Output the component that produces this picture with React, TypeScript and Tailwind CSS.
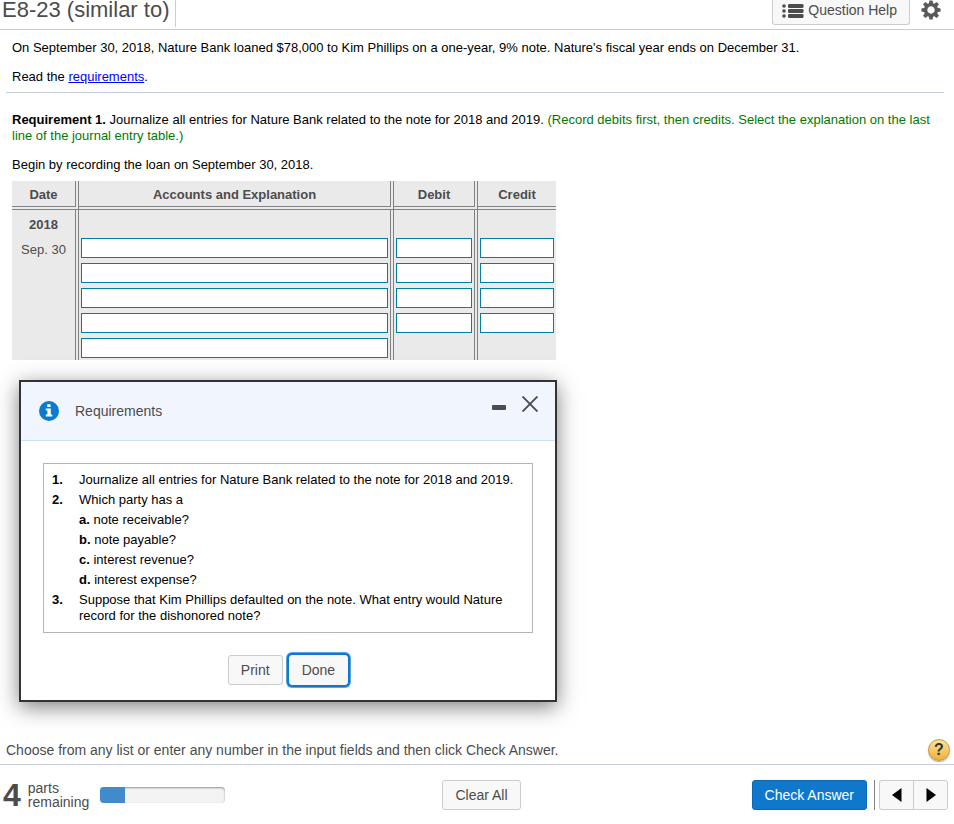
import { useState } from "react";
import type { ReactNode } from "react";
import clsx from "clsx";

interface EntryRow {
  date?: string;
  hasAmounts: boolean;
}

const entryRows: EntryRow[] = [
  { date: "Sep. 30", hasAmounts: true },
  { hasAmounts: true },
  { hasAmounts: true },
  { hasAmounts: true },
  { hasAmounts: false },
];

const parties = [
  { letter: "a.", text: "note receivable?" },
  { letter: "b.", text: "note payable?" },
  { letter: "c.", text: "interest revenue?" },
  { letter: "d.", text: "interest expense?" },
];

const TOTAL_PARTS = 5;

function ListIcon() {
  return (
    <svg width="22" height="14" viewBox="0 0 22 14" fill="#4c4c4c" aria-hidden="true">
      {[2, 7, 12].map((y) => (
        <g key={y}>
          <circle cx="2" cy={y} r="1.8" />
          <rect x="6" y={y - 1.9} width="15.5" height="3.8" rx="1.2" />
        </g>
      ))}
    </svg>
  );
}

function GearIcon() {
  return (
    <svg width="20" height="20" viewBox="-10 -10 20 20" fill="#5a5a5a" aria-hidden="true">
      {[0, 45, 90, 135, 180, 225, 270, 315].map((angle) => (
        <path key={angle} d="M-2.2 -6 L-1.6 -9.6 H1.6 L2.2 -6 Z" transform={`rotate(${angle})`} />
      ))}
      <circle r="5.4" fill="none" stroke="#5a5a5a" strokeWidth="3.4" />
    </svg>
  );
}

function InfoIcon() {
  return (
    <svg width="20" height="20" viewBox="0 0 20 20" aria-hidden="true">
      <circle cx="10" cy="10" r="10" fill="#0a7bd1" />
      <rect x="8.2" y="3.2" width="3.4" height="2.8" rx="0.5" fill="#fff" />
      <path d="M6.8 7.6H11.8V13.6H13.3V15.6H6.8V13.6H8.4V9.6H6.8Z" fill="#fff" />
    </svg>
  );
}

function GreyButton({ children, className, onClick }: { children: ReactNode; className?: string; onClick?: () => void }) {
  return (
    <button
      type="button"
      onClick={onClick}
      className={clsx(
        "h-[30px] rounded-[3px] border bg-[#f8f8f8] px-3 text-sm leading-5 text-[#4c4c4c]",
        className ?? "border-[#cccccc]"
      )}
    >
      {children}
    </button>
  );
}

function JournalTable() {
  const th = "h-[29px] border-b-4 border-double border-[#808285] p-0 pt-[2px] text-center font-bold";
  const divider = "border-r-4 border-double border-[#808285]";
  const field = "block h-5 w-full border border-[#007fa3] bg-white px-1 text-[13px] text-black outline-none";

  return (
    <table className="mt-2 w-[544px] table-fixed border-separate border-spacing-0 bg-[#eaeaea] text-[13px] leading-4 text-[#4c4c4c]">
      <colgroup>
        <col className="w-[67px]" />
        <col className="w-[315px]" />
        <col className="w-[84px]" />
        <col className="w-[78px]" />
      </colgroup>
      <thead>
        <tr>
          <th scope="col" className={clsx(th, divider)}>Date</th>
          <th scope="col" className={clsx(th, divider)}>Accounts and Explanation</th>
          <th scope="col" className={clsx(th, divider)}>Debit</th>
          <th scope="col" className={th}>Credit</th>
        </tr>
      </thead>
      <tbody>
        <tr className="h-[25px]">
          <th scope="row" className={clsx("p-0 pt-1 text-center", divider)}>2018</th>
          <td className={divider} />
          <td className={divider} />
          <td />
        </tr>
        {entryRows.map((row, i) => (
          <tr key={i} className="h-[25px]">
            <td className={clsx("p-0 pt-1 text-center", divider)}>{row.date}</td>
            <td className={clsx("px-[2px] pt-[3px] pb-[2px]", divider)}>
              <input type="text" aria-label={`Account, line ${i + 1}`} className={field} />
            </td>
            <td className={clsx("px-[2px] pt-[3px] pb-[2px]", divider)}>
              {row.hasAmounts && <input type="text" aria-label={`Debit, line ${i + 1}`} className={field} />}
            </td>
            <td className="px-[2px] pt-[3px] pb-[2px]">
              {row.hasAmounts && <input type="text" aria-label={`Credit, line ${i + 1}`} className={field} />}
            </td>
          </tr>
        ))}
      </tbody>
    </table>
  );
}

function RequirementsDialog({ onClose }: { onClose: () => void }) {
  const [minimized, setMinimized] = useState(false);
  const item = "grid grid-cols-[27px_1fr] py-[2px]";

  return (
    <div
      role="dialog"
      aria-labelledby="requirements-title"
      className="mt-5 ml-[19px] w-[538px] border-2 border-[#333333] bg-white shadow-[0_5px_20px_rgba(0,0,0,0.5)]"
    >
      <div className="flex h-[59px] items-center border-b border-[#c4e2f8] bg-[#f1f6fe] pr-[17px] pl-[18px]">
        <InfoIcon />
        <h2 id="requirements-title" className="ml-4 text-sm text-[#4c4c4c]">Requirements</h2>
        <div className="ml-auto flex items-center gap-4 pb-[14px]">
          <button type="button" aria-label="Minimize" onClick={() => setMinimized((m) => !m)}>
            <svg width="14" height="18" viewBox="0 0 14 18" aria-hidden="true">
              <rect y="10" width="14" height="5" rx="1" fill="#4c4c4c" />
            </svg>
          </button>
          <button type="button" aria-label="Close" onClick={onClose}>
            <svg width="16" height="16" viewBox="0 0 16 16" stroke="#4c4c4c" strokeWidth="1.9" aria-hidden="true">
              <path d="M0.5 0.5 15.5 15.5M15.5 0.5 0.5 15.5" />
            </svg>
          </button>
        </div>
      </div>

      {!minimized && (
        <>
          <ol className="mx-[22px] mt-[22px] border border-[#b5b5b5] px-2 py-[6px] text-[13px] leading-4 text-black">
            <li className={item}>
              <b>1.</b>
              <span>Journalize all entries for Nature Bank related to the note for 2018 and 2019.</span>
            </li>
            <li className={item}>
              <b>2.</b>
              <div>
                Which party has a
                {parties.map((p) => (
                  <p key={p.letter} className="mt-1">
                    <b>{p.letter}</b> {p.text}
                  </p>
                ))}
              </div>
            </li>
            <li className={item}>
              <b>3.</b>
              <span>
                Suppose that Kim Phillips defaulted on the note. What entry would Nature record for the dishonored
                note?
              </span>
            </li>
          </ol>
          <div className="flex justify-center gap-[6px] pt-[22px] pb-[15px]">
            <GreyButton>Print</GreyButton>
            <GreyButton
              onClick={onClose}
              className="border-[#f8f8f8] shadow-[0_0_0_2px_#0f78cd,0_0_0_3px_#5ba5df]"
            >
              Done
            </GreyButton>
          </div>
        </>
      )}
    </div>
  );
}

export default function App() {
  const [open, setOpen] = useState(true);
  const [part, setPart] = useState(1);

  return (
    <div className="bg-white font-['Liberation_Sans',Arial,sans-serif] text-[13px] leading-4 text-black">
      {/* Header */}
      <header className="flex h-[30px] items-start border-b border-[#c7cbe0] pr-[13px]">
        <h1 className="h-[27px] border-r border-[#c7cbe0] pr-[6px] pl-[2px] text-[22px] leading-5 text-[#4c4c4c]">
          E8-23 (similar to)
        </h1>
        <button
          type="button"
          className="ml-auto flex h-[25px] items-start gap-1 rounded-b-[3px] border border-t-0 border-[#cccccc] bg-[#f8f8f8] pr-3 pl-[9px] text-sm text-[#4c4c4c]"
        >
          <span className="pt-1">
            <ListIcon />
          </span>
          <span className="leading-5">Question Help</span>
        </button>
        <button type="button" aria-label="Settings" className="ml-[11px]">
          <GearIcon />
        </button>
      </header>

      {/* Problem statement */}
      <section className="mr-[10px] ml-[6px] border-b border-[#c7cbe0] px-[6px] pt-[10px] pb-[7px]">
        <p>
          On September 30, 2018, Nature Bank loaned $78,000 to Kim Phillips on a one-year, 9% note. Nature's fiscal year
          ends on December 31.
        </p>
        <p className="mt-[13px]">
          Read the{" "}
          <a
            href="#requirements"
            className="text-[#0000ff] underline"
            onClick={(e) => {
              e.preventDefault();
              setOpen(true);
            }}
          >
            requirements
          </a>
          .
        </p>
      </section>

      <main className="px-3 pt-[19px]">
        <p>
          <b>Requirement 1.</b> Journalize all entries for Nature Bank related to the note for 2018 and 2019.{" "}
          <span className="text-[#007a00]">
            (Record debits first, then credits. Select the explanation on the last line of the journal entry table.)
          </span>
        </p>
        <p className="mt-[13px]">Begin by recording the loan on September 30, 2018.</p>
        <JournalTable />
      </main>

      {open && <RequirementsDialog onClose={() => setOpen(false)} />}

      {/* Hint bar */}
      <div className="mt-9 flex h-[27px] items-center justify-between border-b border-[#c7cbe0] pr-1 pb-[2px] pl-[6px] text-sm text-[#4c4c4c]">
        <p>Choose from any list or enter any number in the input fields and then click Check Answer.</p>
        <button
          type="button"
          aria-label="Help"
          className="size-[22px] rounded-full border border-[#c99b3b] bg-linear-to-b from-[#fbe39a] to-[#f0b030] text-base leading-5 font-bold text-[#333333] shadow-[0_1px_1px_rgba(0,0,0,0.35)]"
        >
          ?
        </button>
      </div>

      <footer className="grid grid-cols-[1fr_auto_1fr] items-center pt-[15px] pr-[6px] pl-[3px] text-sm text-[#4c4c4c]">
        <div className="flex items-center">
          <span className="text-[32px] leading-[30px] font-bold">4</span>
          <span className="ml-[7px] leading-[14px]">
            parts
            <br />
            remaining
          </span>
          <div
            role="progressbar"
            aria-label="Parts finished"
            aria-valuenow={part}
            aria-valuemax={TOTAL_PARTS}
            className="ml-[11px] h-4 w-[125px] overflow-hidden rounded-[4px] bg-[#f3f3f3] shadow-[inset_0_1px_2px_rgba(0,0,0,0.4)]"
          >
            <div className="h-full bg-[#428bca]" style={{ width: `${(part / TOTAL_PARTS) * 100}%` }} />
          </div>
        </div>
        <GreyButton className="ml-3 border-[#cccccc]">Clear All</GreyButton>
        <div className="flex justify-end">
          <button
            type="button"
            className="h-[30px] rounded-[3px] border border-[#0b68b5] bg-[#0f78cd] px-3 text-sm leading-5 text-white"
          >
            Check Answer
          </button>
          <div className="ml-[7px] w-px bg-[#808080]" />
          <div className="ml-1 flex h-[30px] rounded-[3px] border border-[#cccccc] bg-[#f8f8f8]">
            <button
              type="button"
              aria-label="Previous part"
              className="grid w-[34px] place-items-center border-r border-[#cccccc]"
              onClick={() => setPart((p) => Math.max(1, p - 1))}
            >
              <svg width="10" height="14" viewBox="0 0 10 14" aria-hidden="true">
                <path d="M9.5 0V14L0 7Z" />
              </svg>
            </button>
            <button
              type="button"
              aria-label="Next part"
              className="grid w-[33px] place-items-center"
              onClick={() => setPart((p) => Math.min(TOTAL_PARTS, p + 1))}
            >
              <svg width="10" height="14" viewBox="0 0 10 14" aria-hidden="true">
                <path d="M0.5 0V14L10 7Z" />
              </svg>
            </button>
          </div>
        </div>
      </footer>
    </div>
  );
}
